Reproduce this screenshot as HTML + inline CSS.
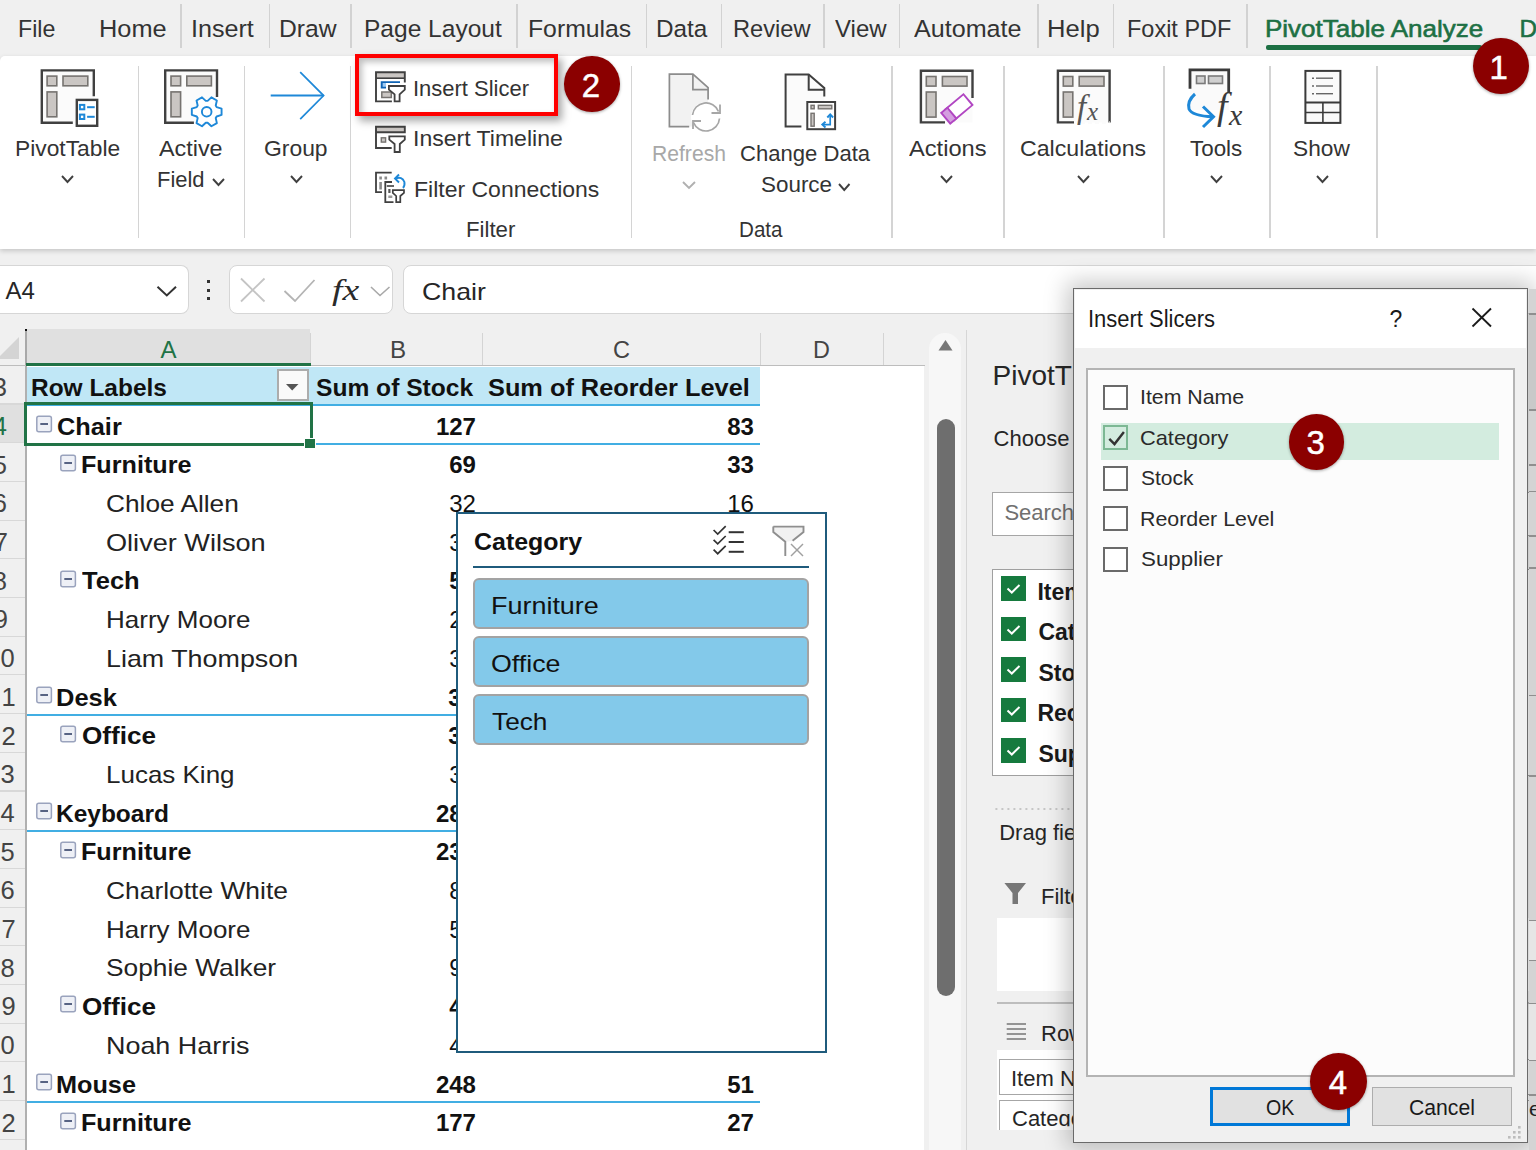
<!DOCTYPE html>
<html><head><meta charset="utf-8"><style>
html,body{margin:0;padding:0;}
body{width:1536px;height:1150px;overflow:hidden;position:relative;background:#f0f0f0;font-family:"Liberation Sans",sans-serif;}
.t{position:absolute;white-space:pre;line-height:1;transform-origin:0 0;}

</style></head><body>
<div style="position:absolute;left:0.00px;top:265.30px;width:188.70px;height:48.70px;background:#fff;border:1px solid #d6d6d6;box-sizing:border-box;border-radius:0 8px 8px 0;border-left:none;"></div>
<span class="t" style="left:5.50px;top:279.28px;font-size:24px;color:#262626;">A4</span>
<svg style="position:absolute;left:150px;top:280px;overflow:visible;" width="35" height="20" viewBox="150 280 35 20"><polyline points="157.5,286.8 166.8,295.5 176,286.8" fill="none" stroke="#333" stroke-width="2"/></svg>
<div style="position:absolute;left:206.50px;top:279.60px;width:3.80px;height:3.80px;background:#333;"></div>
<div style="position:absolute;left:206.50px;top:288.60px;width:3.80px;height:3.80px;background:#333;"></div>
<div style="position:absolute;left:206.50px;top:296.60px;width:3.80px;height:3.80px;background:#333;"></div>
<div style="position:absolute;left:229.00px;top:265.30px;width:164.00px;height:48.70px;background:#fff;border:1px solid #d6d6d6;box-sizing:border-box;border-radius:8px;"></div>
<svg style="position:absolute;left:236px;top:274px;overflow:visible;" width="160" height="32" viewBox="236 274 160 32"><line x1="241" y1="278.5" x2="264.5" y2="301.5" stroke="#c4c4c4" stroke-width="1.8"/><line x1="264.5" y1="278.5" x2="241" y2="301.5" stroke="#c4c4c4" stroke-width="1.8"/><polyline points="284.5,291 295,301 314.5,280" fill="none" stroke="#b4b4b4" stroke-width="1.8"/><polyline points="371,287 380,295.5 389.5,287" fill="none" stroke="#a9a9a9" stroke-width="1.6"/></svg>
<span class="t" style="left:332.00px;top:275.40px;font-size:30px;color:#2a2a2a;font-family:'Liberation Serif',serif;font-style:italic;transform:scaleX(1.2536);">fx</span>
<div style="position:absolute;left:403.30px;top:265.30px;width:1156.70px;height:48.70px;background:#fff;border:1px solid #d6d6d6;box-sizing:border-box;border-radius:8px;"></div>
<span class="t" style="left:421.89px;top:279.68px;font-size:24px;color:#262626;transform:scaleX(1.1143);">Chair</span>
<div style="position:absolute;left:0.00px;top:328.60px;width:925.00px;height:37.40px;background:#f0f0f0;"></div>
<svg style="position:absolute;left:0px;top:330px;overflow:visible;" width="26" height="36" viewBox="0 330 26 36"><polygon points="19,337 19,359 -3,359" fill="#d4d4d4"/></svg>
<div style="position:absolute;left:25.80px;top:328.60px;width:284.70px;height:37.40px;background:#e0e0e0;"></div>
<div style="position:absolute;left:310.00px;top:333.00px;width:1.00px;height:33.00px;background:#d4d4d4;"></div>
<div style="position:absolute;left:481.70px;top:333.00px;width:1.00px;height:33.00px;background:#d4d4d4;"></div>
<div style="position:absolute;left:759.80px;top:333.00px;width:1.00px;height:33.00px;background:#d4d4d4;"></div>
<div style="position:absolute;left:883.00px;top:333.00px;width:1.00px;height:33.00px;background:#d4d4d4;"></div>
<div style="position:absolute;left:25.20px;top:329.00px;width:1.60px;height:37.00px;background:#a9a9a9;"></div>
<div style="position:absolute;left:25.20px;top:328.60px;width:2.00px;height:2.20px;background:#111;"></div>
<div style="position:absolute;left:0.00px;top:364.80px;width:925.00px;height:1.60px;background:#bdbdbd;"></div>
<div style="position:absolute;left:25.80px;top:363.00px;width:285.20px;height:3.70px;background:#217346;"></div>
<span class="t" style="left:160.50px;top:337.98px;font-size:24px;color:#217346;">A</span>
<span class="t" style="left:389.59px;top:337.98px;font-size:24px;color:#444;transform:scaleX(1.0071);">B</span>
<span class="t" style="left:613.02px;top:337.98px;font-size:24px;color:#444;transform:scaleX(0.9812);">C</span>
<span class="t" style="left:813.02px;top:337.98px;font-size:24px;color:#444;transform:scaleX(0.9750);">D</span>
<div style="position:absolute;left:0.00px;top:366.40px;width:25.80px;height:783.60px;background:#f0f0f0;"></div>
<div style="position:absolute;left:0.00px;top:404.00px;width:25.80px;height:38.70px;background:#e0e0e0;"></div>
<div style="position:absolute;left:25.00px;top:366.40px;width:1.60px;height:783.60px;background:#b0b0b0;"></div>
<div style="position:absolute;left:0.00px;top:403.40px;width:25.00px;height:1.20px;background:#d8d8d8;"></div>
<span class="t" style="left:-7.20px;top:375.21px;font-size:25.5px;color:#444;">3</span>
<div style="position:absolute;left:0.00px;top:442.10px;width:25.00px;height:1.20px;background:#d8d8d8;"></div>
<span class="t" style="left:-7.20px;top:413.91px;font-size:25.5px;color:#217346;">4</span>
<div style="position:absolute;left:0.00px;top:480.80px;width:25.00px;height:1.20px;background:#d8d8d8;"></div>
<span class="t" style="left:-7.20px;top:452.61px;font-size:25.5px;color:#444;">5</span>
<div style="position:absolute;left:0.00px;top:519.50px;width:25.00px;height:1.20px;background:#d8d8d8;"></div>
<span class="t" style="left:-7.20px;top:491.31px;font-size:25.5px;color:#444;">6</span>
<div style="position:absolute;left:0.00px;top:558.20px;width:25.00px;height:1.20px;background:#d8d8d8;"></div>
<span class="t" style="left:-6.20px;top:530.01px;font-size:25.5px;color:#444;">7</span>
<div style="position:absolute;left:0.00px;top:596.90px;width:25.00px;height:1.20px;background:#d8d8d8;"></div>
<span class="t" style="left:-7.20px;top:568.71px;font-size:25.5px;color:#444;">8</span>
<div style="position:absolute;left:0.00px;top:635.60px;width:25.00px;height:1.20px;background:#d8d8d8;"></div>
<span class="t" style="left:-6.20px;top:607.41px;font-size:25.5px;color:#444;">9</span>
<div style="position:absolute;left:0.00px;top:674.30px;width:25.00px;height:1.20px;background:#d8d8d8;"></div>
<span class="t" style="left:0.60px;top:646.11px;font-size:25.5px;color:#444;">0</span>
<div style="position:absolute;left:0.00px;top:713.00px;width:25.00px;height:1.20px;background:#d8d8d8;"></div>
<span class="t" style="left:1.60px;top:684.81px;font-size:25.5px;color:#444;">1</span>
<div style="position:absolute;left:0.00px;top:751.70px;width:25.00px;height:1.20px;background:#d8d8d8;"></div>
<span class="t" style="left:1.60px;top:723.51px;font-size:25.5px;color:#444;">2</span>
<div style="position:absolute;left:0.00px;top:790.40px;width:25.00px;height:1.20px;background:#d8d8d8;"></div>
<span class="t" style="left:0.60px;top:762.21px;font-size:25.5px;color:#444;">3</span>
<div style="position:absolute;left:0.00px;top:829.10px;width:25.00px;height:1.20px;background:#d8d8d8;"></div>
<span class="t" style="left:0.60px;top:800.91px;font-size:25.5px;color:#444;">4</span>
<div style="position:absolute;left:0.00px;top:867.80px;width:25.00px;height:1.20px;background:#d8d8d8;"></div>
<span class="t" style="left:0.60px;top:839.61px;font-size:25.5px;color:#444;">5</span>
<div style="position:absolute;left:0.00px;top:906.50px;width:25.00px;height:1.20px;background:#d8d8d8;"></div>
<span class="t" style="left:0.60px;top:878.31px;font-size:25.5px;color:#444;">6</span>
<div style="position:absolute;left:0.00px;top:945.20px;width:25.00px;height:1.20px;background:#d8d8d8;"></div>
<span class="t" style="left:1.60px;top:917.01px;font-size:25.5px;color:#444;">7</span>
<div style="position:absolute;left:0.00px;top:983.90px;width:25.00px;height:1.20px;background:#d8d8d8;"></div>
<span class="t" style="left:0.60px;top:955.71px;font-size:25.5px;color:#444;">8</span>
<div style="position:absolute;left:0.00px;top:1022.60px;width:25.00px;height:1.20px;background:#d8d8d8;"></div>
<span class="t" style="left:1.60px;top:994.41px;font-size:25.5px;color:#444;">9</span>
<div style="position:absolute;left:0.00px;top:1061.30px;width:25.00px;height:1.20px;background:#d8d8d8;"></div>
<span class="t" style="left:0.60px;top:1033.11px;font-size:25.5px;color:#444;">0</span>
<div style="position:absolute;left:0.00px;top:1100.00px;width:25.00px;height:1.20px;background:#d8d8d8;"></div>
<span class="t" style="left:1.60px;top:1071.81px;font-size:25.5px;color:#444;">1</span>
<div style="position:absolute;left:0.00px;top:1138.70px;width:25.00px;height:1.20px;background:#d8d8d8;"></div>
<span class="t" style="left:1.60px;top:1110.51px;font-size:25.5px;color:#444;">2</span>
<div style="position:absolute;left:0.00px;top:1177.40px;width:25.00px;height:1.20px;background:#d8d8d8;"></div>
<span class="t" style="left:0.60px;top:1149.21px;font-size:25.5px;color:#444;">3</span>
<div style="position:absolute;left:26.60px;top:366.40px;width:897.90px;height:783.60px;background:#fff;"></div>
<div style="position:absolute;left:26.60px;top:366.70px;width:733.70px;height:37.30px;background:#c0e7f6;"></div>
<span class="t" style="left:30.98px;top:376.08px;font-size:24px;color:#111;font-weight:700;transform:scaleX(1.0188);">Row Labels</span>
<div style="position:absolute;left:277.00px;top:369.20px;width:31.80px;height:32.30px;background:#fafafa;border:2px solid #acacac;box-sizing:border-box;"></div>
<svg style="position:absolute;left:280px;top:380px;overflow:visible;" width="26" height="12" viewBox="280 380 26 12"><polygon points="286,384 298.5,384 292.2,390.5" fill="#555"/></svg>
<span class="t" style="left:315.60px;top:376.08px;font-size:24px;color:#111;font-weight:700;transform:scaleX(1.0246);">Sum of Stock</span>
<span class="t" style="left:487.50px;top:376.08px;font-size:24px;color:#111;font-weight:700;transform:scaleX(1.0552);">Sum of Reorder Level</span>
<div style="position:absolute;left:26.60px;top:403.70px;width:733.70px;height:2.10px;background:#41aee3;"></div>
<svg style="position:absolute;left:34.5px;top:413.9px;overflow:visible;" width="19.0" height="20.0" viewBox="34.5 413.9 19.0 20.0"><rect x="36.3" y="416.09999999999997" width="14.6" height="15.6" rx="2" fill="#eef0f6" stroke="#9aa3bd" stroke-width="1.5"/><line x1="39.8" y1="423.9" x2="47.5" y2="423.9" stroke="#3c4a6e" stroke-width="1.7"/></svg>
<span class="t" style="left:57.00px;top:414.68px;font-size:24px;color:#111;font-weight:700;transform:scaleX(1.0556);">Chair</span>
<span class="t" style="left:435.90px;top:414.68px;font-size:24px;color:#111;font-weight:700;">127</span>
<span class="t" style="left:727.15px;top:414.68px;font-size:24px;color:#111;font-weight:700;">83</span>
<div style="position:absolute;left:26.60px;top:442.60px;width:733.70px;height:2.10px;background:#41aee3;"></div>
<svg style="position:absolute;left:59px;top:452.59999999999997px;overflow:visible;" width="19" height="20.0" viewBox="59 452.59999999999997 19 20.0"><rect x="60.8" y="454.79999999999995" width="14.6" height="15.6" rx="2" fill="#eef0f6" stroke="#9aa3bd" stroke-width="1.5"/><line x1="64.3" y1="462.59999999999997" x2="72" y2="462.59999999999997" stroke="#3c4a6e" stroke-width="1.7"/></svg>
<span class="t" style="left:81.25px;top:453.38px;font-size:24px;color:#111;font-weight:700;transform:scaleX(1.0483);">Furniture</span>
<span class="t" style="left:449.25px;top:453.38px;font-size:24px;color:#111;font-weight:700;">69</span>
<span class="t" style="left:727.15px;top:453.38px;font-size:24px;color:#111;font-weight:700;">33</span>
<span class="t" style="left:105.91px;top:492.08px;font-size:24px;color:#222;transform:scaleX(1.0939);">Chloe Allen</span>
<span class="t" style="left:449.25px;top:492.08px;font-size:24px;color:#111;">32</span>
<span class="t" style="left:727.15px;top:492.08px;font-size:24px;color:#111;">16</span>
<span class="t" style="left:105.87px;top:530.78px;font-size:24px;color:#222;transform:scaleX(1.1295);">Oliver Wilson</span>
<span class="t" style="left:449.25px;top:530.78px;font-size:24px;color:#111;">37</span>
<span class="t" style="left:727.15px;top:530.78px;font-size:24px;color:#111;">17</span>
<svg style="position:absolute;left:59px;top:568.7px;overflow:visible;" width="19" height="20.0" viewBox="59 568.7 19 20.0"><rect x="60.8" y="570.9000000000001" width="14.6" height="15.6" rx="2" fill="#eef0f6" stroke="#9aa3bd" stroke-width="1.5"/><line x1="64.3" y1="578.7" x2="72" y2="578.7" stroke="#3c4a6e" stroke-width="1.7"/></svg>
<span class="t" style="left:82.30px;top:569.48px;font-size:24px;color:#111;font-weight:700;transform:scaleX(1.0639);">Tech</span>
<span class="t" style="left:449.25px;top:569.48px;font-size:24px;color:#111;font-weight:700;">58</span>
<span class="t" style="left:727.15px;top:569.48px;font-size:24px;color:#111;font-weight:700;">50</span>
<span class="t" style="left:105.92px;top:608.18px;font-size:24px;color:#222;transform:scaleX(1.0832);">Harry Moore</span>
<span class="t" style="left:449.25px;top:608.18px;font-size:24px;color:#111;">25</span>
<span class="t" style="left:727.15px;top:608.18px;font-size:24px;color:#111;">28</span>
<span class="t" style="left:105.88px;top:646.88px;font-size:24px;color:#222;transform:scaleX(1.1194);">Liam Thompson</span>
<span class="t" style="left:449.25px;top:646.88px;font-size:24px;color:#111;">33</span>
<span class="t" style="left:727.15px;top:646.88px;font-size:24px;color:#111;">22</span>
<svg style="position:absolute;left:34.5px;top:684.8000000000002px;overflow:visible;" width="19.0" height="20.0" viewBox="34.5 684.8000000000002 19.0 20.0"><rect x="36.3" y="687.0000000000002" width="14.6" height="15.6" rx="2" fill="#eef0f6" stroke="#9aa3bd" stroke-width="1.5"/><line x1="39.8" y1="694.8000000000002" x2="47.5" y2="694.8000000000002" stroke="#3c4a6e" stroke-width="1.7"/></svg>
<span class="t" style="left:55.94px;top:685.58px;font-size:24px;color:#111;font-weight:700;transform:scaleX(1.0609);">Desk</span>
<span class="t" style="left:448.25px;top:685.58px;font-size:24px;color:#111;font-weight:700;">34</span>
<span class="t" style="left:727.15px;top:685.58px;font-size:24px;color:#111;font-weight:700;">20</span>
<div style="position:absolute;left:26.60px;top:713.50px;width:733.70px;height:2.10px;background:#41aee3;"></div>
<svg style="position:absolute;left:59px;top:723.5000000000001px;overflow:visible;" width="19" height="20.0" viewBox="59 723.5000000000001 19 20.0"><rect x="60.8" y="725.7000000000002" width="14.6" height="15.6" rx="2" fill="#eef0f6" stroke="#9aa3bd" stroke-width="1.5"/><line x1="64.3" y1="733.5000000000001" x2="72" y2="733.5000000000001" stroke="#3c4a6e" stroke-width="1.7"/></svg>
<span class="t" style="left:82.30px;top:724.28px;font-size:24px;color:#111;font-weight:700;transform:scaleX(1.0877);">Office</span>
<span class="t" style="left:448.25px;top:724.28px;font-size:24px;color:#111;font-weight:700;">34</span>
<span class="t" style="left:727.15px;top:724.28px;font-size:24px;color:#111;font-weight:700;">20</span>
<span class="t" style="left:105.92px;top:762.98px;font-size:24px;color:#222;transform:scaleX(1.0825);">Lucas King</span>
<span class="t" style="left:449.25px;top:762.98px;font-size:24px;color:#111;">34</span>
<span class="t" style="left:727.15px;top:762.98px;font-size:24px;color:#111;">20</span>
<svg style="position:absolute;left:34.5px;top:800.9000000000001px;overflow:visible;" width="19.0" height="20.0" viewBox="34.5 800.9000000000001 19.0 20.0"><rect x="36.3" y="803.1000000000001" width="14.6" height="15.6" rx="2" fill="#eef0f6" stroke="#9aa3bd" stroke-width="1.5"/><line x1="39.8" y1="810.9000000000001" x2="47.5" y2="810.9000000000001" stroke="#3c4a6e" stroke-width="1.7"/></svg>
<span class="t" style="left:55.98px;top:801.68px;font-size:24px;color:#111;font-weight:700;transform:scaleX(1.0199);">Keyboard</span>
<span class="t" style="left:435.90px;top:801.68px;font-size:24px;color:#111;font-weight:700;">281</span>
<span class="t" style="left:713.80px;top:801.68px;font-size:24px;color:#111;font-weight:700;">140</span>
<div style="position:absolute;left:26.60px;top:829.60px;width:733.70px;height:2.10px;background:#41aee3;"></div>
<svg style="position:absolute;left:59px;top:839.6000000000001px;overflow:visible;" width="19" height="20.0" viewBox="59 839.6000000000001 19 20.0"><rect x="60.8" y="841.8000000000002" width="14.6" height="15.6" rx="2" fill="#eef0f6" stroke="#9aa3bd" stroke-width="1.5"/><line x1="64.3" y1="849.6000000000001" x2="72" y2="849.6000000000001" stroke="#3c4a6e" stroke-width="1.7"/></svg>
<span class="t" style="left:81.25px;top:840.38px;font-size:24px;color:#111;font-weight:700;transform:scaleX(1.0483);">Furniture</span>
<span class="t" style="left:435.90px;top:840.38px;font-size:24px;color:#111;font-weight:700;">236</span>
<span class="t" style="left:715.13px;top:840.38px;font-size:24px;color:#111;font-weight:700;">110</span>
<span class="t" style="left:105.90px;top:879.08px;font-size:24px;color:#222;transform:scaleX(1.0997);">Charlotte White</span>
<span class="t" style="left:449.25px;top:879.08px;font-size:24px;color:#111;">85</span>
<span class="t" style="left:727.15px;top:879.08px;font-size:24px;color:#111;">40</span>
<span class="t" style="left:105.92px;top:917.78px;font-size:24px;color:#222;transform:scaleX(1.0832);">Harry Moore</span>
<span class="t" style="left:449.25px;top:917.78px;font-size:24px;color:#111;">56</span>
<span class="t" style="left:727.15px;top:917.78px;font-size:24px;color:#111;">30</span>
<span class="t" style="left:105.90px;top:956.48px;font-size:24px;color:#222;transform:scaleX(1.0961);">Sophie Walker</span>
<span class="t" style="left:449.25px;top:956.48px;font-size:24px;color:#111;">95</span>
<span class="t" style="left:727.15px;top:956.48px;font-size:24px;color:#111;">40</span>
<svg style="position:absolute;left:59px;top:994.4000000000001px;overflow:visible;" width="19" height="20.0" viewBox="59 994.4000000000001 19 20.0"><rect x="60.8" y="996.6000000000001" width="14.6" height="15.6" rx="2" fill="#eef0f6" stroke="#9aa3bd" stroke-width="1.5"/><line x1="64.3" y1="1004.4000000000001" x2="72" y2="1004.4000000000001" stroke="#3c4a6e" stroke-width="1.7"/></svg>
<span class="t" style="left:82.30px;top:995.18px;font-size:24px;color:#111;font-weight:700;transform:scaleX(1.0877);">Office</span>
<span class="t" style="left:449.25px;top:995.18px;font-size:24px;color:#111;font-weight:700;">45</span>
<span class="t" style="left:727.15px;top:995.18px;font-size:24px;color:#111;font-weight:700;">30</span>
<span class="t" style="left:105.88px;top:1033.88px;font-size:24px;color:#222;transform:scaleX(1.1209);">Noah Harris</span>
<span class="t" style="left:449.25px;top:1033.88px;font-size:24px;color:#111;">45</span>
<span class="t" style="left:727.15px;top:1033.88px;font-size:24px;color:#111;">30</span>
<svg style="position:absolute;left:34.5px;top:1071.8000000000002px;overflow:visible;" width="19.0" height="20.0" viewBox="34.5 1071.8000000000002 19.0 20.0"><rect x="36.3" y="1074.0000000000002" width="14.6" height="15.6" rx="2" fill="#eef0f6" stroke="#9aa3bd" stroke-width="1.5"/><line x1="39.8" y1="1081.8000000000002" x2="47.5" y2="1081.8000000000002" stroke="#3c4a6e" stroke-width="1.7"/></svg>
<span class="t" style="left:55.95px;top:1072.58px;font-size:24px;color:#111;font-weight:700;transform:scaleX(1.0514);">Mouse</span>
<span class="t" style="left:435.90px;top:1072.58px;font-size:24px;color:#111;font-weight:700;">248</span>
<span class="t" style="left:727.15px;top:1072.58px;font-size:24px;color:#111;font-weight:700;">51</span>
<div style="position:absolute;left:26.60px;top:1100.50px;width:733.70px;height:2.10px;background:#41aee3;"></div>
<svg style="position:absolute;left:59px;top:1110.5px;overflow:visible;" width="19" height="20.0" viewBox="59 1110.5 19 20.0"><rect x="60.8" y="1112.7" width="14.6" height="15.6" rx="2" fill="#eef0f6" stroke="#9aa3bd" stroke-width="1.5"/><line x1="64.3" y1="1120.5" x2="72" y2="1120.5" stroke="#3c4a6e" stroke-width="1.7"/></svg>
<span class="t" style="left:81.25px;top:1111.28px;font-size:24px;color:#111;font-weight:700;transform:scaleX(1.0483);">Furniture</span>
<span class="t" style="left:435.90px;top:1111.28px;font-size:24px;color:#111;font-weight:700;">177</span>
<span class="t" style="left:727.15px;top:1111.28px;font-size:24px;color:#111;font-weight:700;">27</span>
<span class="t" style="left:107.00px;top:1149.98px;font-size:24px;color:#222;">Ava Brown</span>
<span class="t" style="left:449.25px;top:1149.98px;font-size:24px;color:#111;">90</span>
<span class="t" style="left:727.15px;top:1149.98px;font-size:24px;color:#111;">12</span>
<div style="position:absolute;left:23.60px;top:402.30px;width:289.00px;height:44.00px;border:3px solid #217346;box-sizing:border-box;"></div>
<div style="position:absolute;left:305.30px;top:438.60px;width:9.50px;height:9.70px;background:#217346;outline:1.5px solid #fff;"></div>
<div style="position:absolute;left:456.30px;top:1053.00px;width:370.30px;height:5.00px;background:#fff;"></div>
<div style="position:absolute;left:456.30px;top:512.30px;width:370.30px;height:541.00px;background:#fff;border:2px solid #1f5b7c;box-sizing:border-box;"></div>
<span class="t" style="left:473.90px;top:530.48px;font-size:24px;color:#111;font-weight:700;transform:scaleX(1.0394);">Category</span>
<svg style="position:absolute;left:706px;top:520px;overflow:visible;" width="104" height="40" viewBox="706 520 104 40"><polyline points="713.6,530.0 717.7,534.1 725.7,526.2" fill="none" stroke="#333" stroke-width="1.7"/><line x1="728.7" y1="532.2" x2="743.8" y2="532.2" stroke="#333" stroke-width="2"/><polyline points="713.6,539.8 717.7,543.9 725.7,536.0" fill="none" stroke="#333" stroke-width="1.7"/><line x1="728.7" y1="542.0" x2="743.8" y2="542.0" stroke="#333" stroke-width="2"/><polyline points="713.6,549.6 717.7,553.7 725.7,545.8000000000001" fill="none" stroke="#333" stroke-width="1.7"/><line x1="728.7" y1="551.8000000000001" x2="743.8" y2="551.8000000000001" stroke="#333" stroke-width="2"/><polygon points="773.3,526.6 803.5,526.6 803.5,532 792.6,541 785.3,541.7 773.3,532" fill="#f1f1f1"/><polyline points="773.3,526.6 803.5,526.6 803.5,532 792.6,540.8" fill="none" stroke="#8f8f8f" stroke-width="1.9"/><polyline points="773.3,526.6 773.3,532 785.3,541.7 785.3,556" fill="none" stroke="#8f8f8f" stroke-width="1.9"/><line x1="791" y1="544" x2="803" y2="556" stroke="#a0a0a0" stroke-width="1.4"/><line x1="803" y1="544" x2="791" y2="556" stroke="#a0a0a0" stroke-width="1.4"/></svg>
<div style="position:absolute;left:473.30px;top:566.20px;width:336.00px;height:2.00px;background:#1f5b7c;"></div>
<div style="position:absolute;left:473.30px;top:578.00px;width:336.00px;height:51.00px;background:#83c9ea;border:2px solid #a3a3a3;box-sizing:border-box;border-radius:6px;"></div>
<span class="t" style="left:490.88px;top:594.48px;font-size:24px;color:#111;transform:scaleX(1.1226);">Furniture</span>
<div style="position:absolute;left:473.30px;top:636.00px;width:336.00px;height:51.00px;background:#83c9ea;border:2px solid #a3a3a3;box-sizing:border-box;border-radius:6px;"></div>
<span class="t" style="left:490.88px;top:652.48px;font-size:24px;color:#111;transform:scaleX(1.1165);">Office</span>
<div style="position:absolute;left:473.30px;top:694.00px;width:336.00px;height:51.30px;background:#83c9ea;border:2px solid #a3a3a3;box-sizing:border-box;border-radius:6px;"></div>
<span class="t" style="left:492.00px;top:710.48px;font-size:24px;color:#111;transform:scaleX(1.0943);">Tech</span>
<div style="position:absolute;left:924.50px;top:366.40px;width:42.20px;height:783.60px;background:#f0f0f0;"></div>
<div style="position:absolute;left:928.50px;top:333.00px;width:32.50px;height:867.00px;background:#f7f7f7;border-radius:16px;"></div>
<svg style="position:absolute;left:936px;top:338px;overflow:visible;" width="20" height="14" viewBox="936 338 20 14"><polygon points="945.5,340 952.5,350.5 938.5,350.5" fill="#777"/></svg>
<div style="position:absolute;left:937.00px;top:419.30px;width:17.50px;height:576.70px;background:#6e6e6e;border-radius:9px;"></div>
<div style="position:absolute;left:966.20px;top:330.00px;width:1.20px;height:820.00px;background:#d6d6d6;"></div>
<div style="position:absolute;left:967.40px;top:314.00px;width:568.60px;height:836.00px;background:#f0f0f0;"></div>
<span class="t" style="left:992.60px;top:361.59px;font-size:28px;color:#262626;">PivotT</span>
<span class="t" style="left:993.60px;top:428.47px;font-size:22px;color:#262626;">Choose fields to add to report:</span>
<div style="position:absolute;left:991.90px;top:492.00px;width:538.10px;height:43.80px;background:#fff;border:1.5px solid #a6a6a6;box-sizing:border-box;"></div>
<span class="t" style="left:1004.40px;top:501.77px;font-size:22px;color:#707070;">Search</span>
<div style="position:absolute;left:991.60px;top:568.60px;width:538.40px;height:207.50px;background:#fff;border:1.5px solid #a0a0a0;box-sizing:border-box;"></div>
<div style="position:absolute;left:1000.70px;top:576.30px;width:25.30px;height:24.40px;background:#167a3e;"></div>
<svg style="position:absolute;left:1003px;top:578.3px;overflow:visible;" width="21" height="20.0" viewBox="1003 578.3 21 20.0"><polyline points="1007.5,588.8 1011.8,592.8 1019.5,585.3" fill="none" stroke="#fff" stroke-width="2"/></svg>
<span class="t" style="left:1037.40px;top:580.53px;font-size:23px;color:#1a1a1a;font-weight:700;">Item Name</span>
<div style="position:absolute;left:1000.70px;top:616.80px;width:25.30px;height:24.40px;background:#167a3e;"></div>
<svg style="position:absolute;left:1003px;top:618.8px;overflow:visible;" width="21" height="20.0" viewBox="1003 618.8 21 20.0"><polyline points="1007.5,629.3 1011.8,633.3 1019.5,625.8" fill="none" stroke="#fff" stroke-width="2"/></svg>
<span class="t" style="left:1038.40px;top:621.03px;font-size:23px;color:#1a1a1a;font-weight:700;">Category</span>
<div style="position:absolute;left:1000.70px;top:657.30px;width:25.30px;height:24.40px;background:#167a3e;"></div>
<svg style="position:absolute;left:1003px;top:659.3px;overflow:visible;" width="21" height="20.0" viewBox="1003 659.3 21 20.0"><polyline points="1007.5,669.8 1011.8,673.8 1019.5,666.3" fill="none" stroke="#fff" stroke-width="2"/></svg>
<span class="t" style="left:1038.40px;top:661.53px;font-size:23px;color:#1a1a1a;font-weight:700;">Stock</span>
<div style="position:absolute;left:1000.70px;top:697.80px;width:25.30px;height:24.40px;background:#167a3e;"></div>
<svg style="position:absolute;left:1003px;top:699.8px;overflow:visible;" width="21" height="20.0" viewBox="1003 699.8 21 20.0"><polyline points="1007.5,710.3 1011.8,714.3 1019.5,706.8" fill="none" stroke="#fff" stroke-width="2"/></svg>
<span class="t" style="left:1037.40px;top:702.03px;font-size:23px;color:#1a1a1a;font-weight:700;">Reorder Level</span>
<div style="position:absolute;left:1000.70px;top:738.30px;width:25.30px;height:24.40px;background:#167a3e;"></div>
<svg style="position:absolute;left:1003px;top:740.3px;overflow:visible;" width="21" height="20.0" viewBox="1003 740.3 21 20.0"><polyline points="1007.5,750.8 1011.8,754.8 1019.5,747.3" fill="none" stroke="#fff" stroke-width="2"/></svg>
<span class="t" style="left:1038.40px;top:742.53px;font-size:23px;color:#1a1a1a;font-weight:700;">Supplier</span>
<svg style="position:absolute;left:994px;top:806px;overflow:visible;" width="542" height="6" viewBox="994 806 542 6"><line x1="995.4" y1="809" x2="1536" y2="809" stroke="#b8b8b8" stroke-width="1.3" stroke-dasharray="2 4"/></svg>
<span class="t" style="left:999.20px;top:822.37px;font-size:22px;color:#262626;">Drag fields between areas below:</span>
<svg style="position:absolute;left:1002px;top:880px;overflow:visible;" width="28" height="26" viewBox="1002 880 28 26"><polygon points="1004.4,883 1026,883 1018,893 1018,904 1012.5,904 1012.5,893" fill="#777"/></svg>
<span class="t" style="left:1041.00px;top:886.17px;font-size:22px;color:#262626;">Filters</span>
<div style="position:absolute;left:997.00px;top:918.40px;width:539.00px;height:72.40px;background:#fff;"></div>
<div style="position:absolute;left:997.00px;top:1002.30px;width:539.00px;height:1.50px;background:#bdbdbd;"></div>
<svg style="position:absolute;left:1004px;top:1020px;overflow:visible;" width="26" height="22" viewBox="1004 1020 26 22"><line x1="1006.7" y1="1024" x2="1026" y2="1024" stroke="#8a8a8a" stroke-width="1.8"/><line x1="1006.7" y1="1029" x2="1026" y2="1029" stroke="#8a8a8a" stroke-width="1.8"/><line x1="1006.7" y1="1034" x2="1026" y2="1034" stroke="#8a8a8a" stroke-width="1.8"/><line x1="1006.7" y1="1039" x2="1026" y2="1039" stroke="#8a8a8a" stroke-width="1.8"/></svg>
<span class="t" style="left:1041.00px;top:1022.87px;font-size:22px;color:#262626;">Rows</span>
<div style="position:absolute;left:997.00px;top:1050.00px;width:539.00px;height:100.00px;background:#fff;"></div>
<div style="position:absolute;left:997.00px;top:1130.00px;width:539.00px;height:20.00px;background:#f0f0f0;"></div>
<div style="position:absolute;left:999.30px;top:1059.40px;width:536.70px;height:35.40px;background:#fff;border:1.5px solid #a6a6a6;box-sizing:border-box;"></div>
<span class="t" style="left:1011.00px;top:1067.97px;font-size:22px;color:#262626;">Item Name</span>
<div style="position:absolute;left:999.30px;top:1100.20px;width:536.70px;height:39.80px;background:#fff;border:1.5px solid #a6a6a6;box-sizing:border-box;"></div>
<div style="position:absolute;left:997.00px;top:1130.00px;width:539.00px;height:20.00px;background:#f0f0f0;"></div>
<span class="t" style="left:1012.00px;top:1108.17px;font-size:22px;color:#262626;clip-path:inset(0 0 4px 0);">Category</span>
<div style="position:absolute;left:0.00px;top:0.00px;width:1536.00px;height:55.00px;background:#f0f0f0;"></div>
<span class="t" style="left:18.09px;top:17.23px;font-size:24.3px;color:#333333;transform:scaleX(0.9553);">File</span>
<span class="t" style="left:99.41px;top:17.23px;font-size:24.3px;color:#333333;transform:scaleX(1.0434);">Home</span>
<span class="t" style="left:191.43px;top:17.23px;font-size:24.3px;color:#333333;transform:scaleX(1.0336);">Insert</span>
<span class="t" style="left:278.97px;top:17.23px;font-size:24.3px;color:#333333;transform:scaleX(1.0154);">Draw</span>
<span class="t" style="left:363.68px;top:17.23px;font-size:24.3px;color:#333333;transform:scaleX(1.0097);">Page Layout</span>
<span class="t" style="left:527.96px;top:17.23px;font-size:24.3px;color:#333333;transform:scaleX(1.0191);">Formulas</span>
<span class="t" style="left:655.99px;top:17.23px;font-size:24.3px;color:#333333;">Data</span>
<span class="t" style="left:733.05px;top:17.23px;font-size:24.3px;color:#333333;transform:scaleX(0.9729);">Review</span>
<span class="t" style="left:834.70px;top:17.23px;font-size:24.3px;color:#333333;transform:scaleX(0.9871);">View</span>
<span class="t" style="left:914.00px;top:17.23px;font-size:24.3px;color:#333333;transform:scaleX(1.0340);">Automate</span>
<span class="t" style="left:1047.39px;top:17.23px;font-size:24.3px;color:#333333;transform:scaleX(1.0536);">Help</span>
<span class="t" style="left:1127.07px;top:17.23px;font-size:24.3px;color:#333333;transform:scaleX(0.9662);">Foxit PDF</span>
<span class="t" style="left:1264.86px;top:17.23px;font-size:24.3px;color:#1d7044;transform:scaleX(1.0701);-webkit-text-stroke:0.6px #1d7044;">PivotTable Analyze</span>
<span class="t" style="left:1519.50px;top:17.23px;font-size:24.3px;color:#1d7044;-webkit-text-stroke:0.6px #1d7044;">D</span>
<div style="position:absolute;left:180.40px;top:4.00px;width:1.20px;height:43.50px;background:#d2d2d2;"></div>
<div style="position:absolute;left:268.90px;top:4.00px;width:1.20px;height:43.50px;background:#d2d2d2;"></div>
<div style="position:absolute;left:350.40px;top:4.00px;width:1.20px;height:43.50px;background:#d2d2d2;"></div>
<div style="position:absolute;left:516.40px;top:4.00px;width:1.20px;height:43.50px;background:#d2d2d2;"></div>
<div style="position:absolute;left:645.90px;top:4.00px;width:1.20px;height:43.50px;background:#d2d2d2;"></div>
<div style="position:absolute;left:720.80px;top:4.00px;width:1.20px;height:43.50px;background:#d2d2d2;"></div>
<div style="position:absolute;left:823.40px;top:4.00px;width:1.20px;height:43.50px;background:#d2d2d2;"></div>
<div style="position:absolute;left:898.80px;top:4.00px;width:1.20px;height:43.50px;background:#d2d2d2;"></div>
<div style="position:absolute;left:1037.40px;top:4.00px;width:1.20px;height:43.50px;background:#d2d2d2;"></div>
<div style="position:absolute;left:1113.00px;top:4.00px;width:1.20px;height:43.50px;background:#d2d2d2;"></div>
<div style="position:absolute;left:1246.40px;top:4.00px;width:1.20px;height:43.50px;background:#d2d2d2;"></div>
<div style="position:absolute;left:1266.00px;top:45.00px;width:216.00px;height:4.50px;background:#1d7044;border-radius:2px;"></div>
<div style="position:absolute;left:0.00px;top:55.50px;width:1536.00px;height:193.50px;background:#ffffff;border-radius:5px 0 0 0;box-shadow:0 2px 5px rgba(0,0,0,0.18);"></div>
<div style="position:absolute;left:137.60px;top:66.00px;width:1.40px;height:171.50px;background:#d4d4d4;"></div>
<div style="position:absolute;left:243.70px;top:66.00px;width:1.40px;height:171.50px;background:#d4d4d4;"></div>
<div style="position:absolute;left:350.10px;top:66.00px;width:1.40px;height:171.50px;background:#d4d4d4;"></div>
<div style="position:absolute;left:630.60px;top:66.00px;width:1.40px;height:171.50px;background:#d4d4d4;"></div>
<div style="position:absolute;left:891.30px;top:66.00px;width:1.40px;height:171.50px;background:#d4d4d4;"></div>
<div style="position:absolute;left:1003.20px;top:66.00px;width:1.40px;height:171.50px;background:#d4d4d4;"></div>
<div style="position:absolute;left:1163.20px;top:66.00px;width:1.40px;height:171.50px;background:#d4d4d4;"></div>
<div style="position:absolute;left:1269.30px;top:66.00px;width:1.40px;height:171.50px;background:#d4d4d4;"></div>
<div style="position:absolute;left:1376.20px;top:66.00px;width:1.40px;height:171.50px;background:#d4d4d4;"></div>
<span class="t" style="left:15.39px;top:138.26px;font-size:22.6px;color:#333333;transform:scaleX(1.0090);">PivotTable</span>
<svg style="position:absolute;left:61.50px;top:176.00px;overflow:visible;" width="11.00" height="6.00" viewBox="0 0 11.00 6.00"><polyline points="0,0 5.50,6.00 11.00,0" fill="none" stroke="#404040" stroke-width="1.9"/></svg>
<span class="t" style="left:159.00px;top:138.26px;font-size:22.6px;color:#333333;transform:scaleX(1.0335);">Active</span>
<span class="t" style="left:156.53px;top:168.66px;font-size:22.6px;color:#333333;transform:scaleX(0.9703);">Field</span>
<svg style="position:absolute;left:212.50px;top:178.50px;overflow:visible;" width="11.00" height="6.00" viewBox="0 0 11.00 6.00"><polyline points="0,0 5.50,6.00 11.00,0" fill="none" stroke="#404040" stroke-width="1.9"/></svg>
<span class="t" style="left:264.49px;top:138.26px;font-size:22.6px;color:#333333;transform:scaleX(1.0126);">Group</span>
<svg style="position:absolute;left:291.00px;top:176.00px;overflow:visible;" width="11.00" height="6.00" viewBox="0 0 11.00 6.00"><polyline points="0,0 5.50,6.00 11.00,0" fill="none" stroke="#404040" stroke-width="1.9"/></svg>
<span class="t" style="left:412.86px;top:77.96px;font-size:22.6px;color:#333333;transform:scaleX(0.9724);">Insert Slicer</span>
<span class="t" style="left:412.76px;top:128.36px;font-size:22.6px;color:#333333;transform:scaleX(1.0196);">Insert Timeline</span>
<span class="t" style="left:413.78px;top:178.56px;font-size:22.6px;color:#333333;transform:scaleX(1.0178);">Filter Connections</span>
<span class="t" style="left:466.02px;top:219.16px;font-size:22.6px;color:#333333;transform:scaleX(0.9822);">Filter</span>
<span class="t" style="left:651.57px;top:143.26px;font-size:22.6px;color:#a8a8a8;transform:scaleX(0.9349);">Refresh</span>
<svg style="position:absolute;left:683.00px;top:182.00px;overflow:visible;" width="12.00" height="6.00" viewBox="0 0 12.00 6.00"><polyline points="0,0 6.00,6.00 12.00,0" fill="none" stroke="#b0b0b0" stroke-width="1.9"/></svg>
<span class="t" style="left:740.02px;top:143.26px;font-size:22.6px;color:#333333;transform:scaleX(0.9768);">Change Data</span>
<span class="t" style="left:760.51px;top:174.06px;font-size:22.6px;color:#333333;transform:scaleX(0.9925);">Source</span>
<svg style="position:absolute;left:838.50px;top:183.50px;overflow:visible;" width="10.50" height="6.00" viewBox="0 0 10.50 6.00"><polyline points="0,0 5.25,6.00 10.50,0" fill="none" stroke="#404040" stroke-width="1.9"/></svg>
<span class="t" style="left:738.99px;top:218.56px;font-size:22.6px;color:#333333;transform:scaleX(0.9118);">Data</span>
<span class="t" style="left:908.50px;top:137.96px;font-size:22.6px;color:#333333;transform:scaleX(1.0475);">Actions</span>
<svg style="position:absolute;left:940.50px;top:176.00px;overflow:visible;" width="11.00" height="6.00" viewBox="0 0 11.00 6.00"><polyline points="0,0 5.50,6.00 11.00,0" fill="none" stroke="#404040" stroke-width="1.9"/></svg>
<span class="t" style="left:1019.98px;top:137.96px;font-size:22.6px;color:#333333;transform:scaleX(1.0248);">Calculations</span>
<svg style="position:absolute;left:1077.50px;top:176.00px;overflow:visible;" width="11.00" height="6.00" viewBox="0 0 11.00 6.00"><polyline points="0,0 5.50,6.00 11.00,0" fill="none" stroke="#404040" stroke-width="1.9"/></svg>
<span class="t" style="left:1190.00px;top:137.66px;font-size:22.6px;color:#333333;transform:scaleX(0.9915);">Tools</span>
<svg style="position:absolute;left:1211.00px;top:175.50px;overflow:visible;" width="11.00" height="6.00" viewBox="0 0 11.00 6.00"><polyline points="0,0 5.50,6.00 11.00,0" fill="none" stroke="#404040" stroke-width="1.9"/></svg>
<span class="t" style="left:1293.29px;top:137.66px;font-size:22.6px;color:#333333;transform:scaleX(1.0053);">Show</span>
<svg style="position:absolute;left:1317.00px;top:175.50px;overflow:visible;" width="11.00" height="6.00" viewBox="0 0 11.00 6.00"><polyline points="0,0 5.50,6.00 11.00,0" fill="none" stroke="#404040" stroke-width="1.9"/></svg>
<svg style="position:absolute;left:36px;top:64px;overflow:visible;" width="70" height="70" viewBox="36 64 70 70"><rect x="41.8" y="70.4" width="52.0" height="52.3" fill="#fbfbfb"/><polyline points="72.8,122.7 41.8,122.7 41.8,70.4 93.8,70.4 93.8,96.3" fill="none" stroke="#404040" stroke-width="2.4"/><rect x="47.099999999999994" y="76.1" width="9.700000000000005" height="9.699999999999998" fill="#cac6c3" stroke="#767370" stroke-width="1.6"/><rect x="63.0" y="76.1" width="24.79999999999999" height="9.699999999999998" fill="#cac6c3" stroke="#767370" stroke-width="1.6"/><rect x="47.099999999999994" y="91.89999999999999" width="9.700000000000005" height="24.9" fill="#cac6c3" stroke="#767370" stroke-width="1.6"/><rect x="76.8" y="99.9" width="20.4" height="25.9" fill="#fff" stroke="#404040" stroke-width="2.4"/><rect x="79.9" y="104.9" width="4.4" height="4.4" fill="#fff" stroke="#1e88d8" stroke-width="2"/><rect x="79.9" y="114.6" width="4.4" height="4.4" fill="#fff" stroke="#1e88d8" stroke-width="2"/><line x1="87.1" y1="107.2" x2="94.7" y2="107.2" stroke="#1e88d8" stroke-width="2"/><line x1="87.1" y1="116.8" x2="94.7" y2="116.8" stroke="#1e88d8" stroke-width="2"/></svg>
<svg style="position:absolute;left:158px;top:64px;overflow:visible;" width="70" height="70" viewBox="158 64 70 70"><rect x="165.2" y="70.4" width="51.80000000000001" height="52.3" fill="#fbfbfb"/><polyline points="193.9,122.7 165.2,122.7 165.2,70.4 217,70.4 217,96.9" fill="none" stroke="#404040" stroke-width="2.4"/><rect x="171.0" y="76.1" width="9.600000000000017" height="9.699999999999998" fill="#cac6c3" stroke="#767370" stroke-width="1.6"/><rect x="186.8" y="76.1" width="24.599999999999987" height="9.699999999999998" fill="#cac6c3" stroke="#767370" stroke-width="1.6"/><rect x="171.0" y="91.89999999999999" width="9.600000000000017" height="24.9" fill="#cac6c3" stroke="#767370" stroke-width="1.6"/><path d="M221.57,108.64 L221.57,114.96 L216.65,116.48 L215.73,118.08 L216.87,123.10 L211.40,126.26 L207.62,122.76 L205.78,122.76 L202.00,126.26 L196.53,123.10 L197.67,118.08 L196.75,116.48 L191.83,114.96 L191.83,108.64 L196.75,107.12 L197.67,105.52 L196.53,100.50 L202.00,97.34 L205.78,100.84 L207.62,100.84 L211.40,97.34 L216.87,100.50 L215.73,105.52 L216.65,107.12Z" fill="#fff" stroke="#1e88d8" stroke-width="1.9" stroke-linejoin="round"/><circle cx="206.7" cy="111.8" r="4.8" fill="none" stroke="#1e88d8" stroke-width="1.9"/></svg>
<svg style="position:absolute;left:264px;top:64px;overflow:visible;" width="70" height="70" viewBox="264 64 70 70"><line x1="270.7" y1="95.6" x2="323.6" y2="95.6" stroke="#1e88d8" stroke-width="2"/><polyline points="300.2,72.2 323.6,95.6 300.2,119.1" fill="none" stroke="#1e88d8" stroke-width="1.7"/></svg>
<svg style="position:absolute;left:370px;top:66px;overflow:visible;" width="42" height="42" viewBox="370 66 42 42"><rect x="376" y="72.3" width="28.8" height="29.1" fill="#fff"/><rect x="376" y="72.3" width="28.8" height="5.9" fill="#cac6c3"/><polyline points="391.9,101.4 376,101.4 376,72.3 404.8,72.3 404.8,82.6" fill="none" stroke="#404040" stroke-width="1.9"/><line x1="376" y1="78.2" x2="404.8" y2="78.2" stroke="#404040" stroke-width="1.6"/><rect x="382" y="83" width="4" height="4" fill="#9cc8f2"/><polyline points="400,82.1 381.7,82.1 381.7,87.6 386,87.6" fill="none" stroke="#0f63b4" stroke-width="1.9"/><rect x="381.8" y="92" width="9.5" height="5.5" fill="#cac6c3" stroke="#767370" stroke-width="1.5"/><path d="M388.9,86 H404.8 V89.6 L399.6,94.3 V101.4 H394.6 V94.3 L388.9,89.6 Z" fill="#fff" stroke="#404040" stroke-width="1.8" stroke-linejoin="miter"/></svg>
<svg style="position:absolute;left:370px;top:120px;overflow:visible;" width="42" height="40" viewBox="370 120 42 40"><rect x="376" y="126.7" width="28.8" height="21.3" fill="#fff"/><rect x="376" y="126.7" width="28.8" height="5.5" fill="#cac6c3"/><polyline points="391.7,148 376,148 376,126.7 404.8,126.7 404.8,132.2 376,132.2" fill="none" stroke="#404040" stroke-width="1.9"/><rect x="381.3" y="137.8" width="4.3" height="4.3" fill="#c8c6c4" stroke="#767370" stroke-width="1.4"/><path d="M389.3,136.3 H404.8 V139.6 L399.8,144 V152 H394.6 V144 L389.3,139.6 Z" fill="#fff" stroke="#404040" stroke-width="1.8"/></svg>
<svg style="position:absolute;left:370px;top:166px;overflow:visible;" width="42" height="42" viewBox="370 166 42 42"><polyline points="391.7,172.7 376,172.7 376,192.1 382,192.1" fill="none" stroke="#404040" stroke-width="1.8"/><rect x="379.3" y="176.5" width="2.6" height="3" fill="#8a8a8a"/><rect x="384.5" y="176.5" width="2.6" height="3" fill="#8a8a8a"/><rect x="379.3" y="182" width="2.6" height="7.5" fill="#8a8a8a"/><polyline points="393.5,202.2 385.3,202.2 385.3,182 392,182" fill="none" stroke="#404040" stroke-width="1.8"/><line x1="386.8" y1="186" x2="394" y2="186" stroke="#404040" stroke-width="1.6"/><rect x="388.3" y="189" width="2.2" height="4" fill="#555"/><rect x="388.3" y="195.5" width="4" height="2.5" fill="#999"/><path d="M392.8,190.2 H404 V192.8 L400.3,196 V202.2 H396.2 V196 L392.8,192.8 Z" fill="#fff" stroke="#404040" stroke-width="1.7"/><path d="M395.5,178.6 Q402,176 404.4,182 Q405,186 403,188" fill="none" stroke="#1e88d8" stroke-width="1.9"/><polyline points="399,174.5 395,178.5 399,182.5" fill="none" stroke="#1e88d8" stroke-width="1.9"/></svg>
<svg style="position:absolute;left:660px;top:66px;overflow:visible;clip-path:inset(0 0 0 0);" width="70" height="70" viewBox="660 66 70 70"><path d="M669.4,74.2 H692.9 L708.1,87.6 V126.6 H669.4 Z" fill="#f2f2f2"/><polyline points="689.2,126.6 669.4,126.6 669.4,74.2 692.9,74.2 708.1,87.6 708.1,99.5" fill="none" stroke="#8c8c8c" stroke-width="1.7"/><polyline points="692.9,74.2 692.9,89.7 708.1,89.7" fill="none" stroke="#8c8c8c" stroke-width="1.7"/><circle cx="706" cy="117" r="15" fill="#fff"/><path d="M692.5,115 A13.5,13.5 0 0 1 718.5,111.5" fill="none" stroke="#a6a6a6" stroke-width="1.7"/><path d="M719.5,118.5 A13.5,13.5 0 0 1 693.5,122.5" fill="none" stroke="#a6a6a6" stroke-width="1.7"/><polyline points="720,104.5 720,113 711.5,113" fill="none" stroke="#a6a6a6" stroke-width="1.8"/><polyline points="693,129 693,121 701,121" fill="none" stroke="#a6a6a6" stroke-width="1.8"/></svg>
<svg style="position:absolute;left:778px;top:66px;overflow:visible;" width="64" height="70" viewBox="778 66 64 70"><path d="M785.6,74.5 H808.7 L824.3,87.9 V126.6 H785.6 Z" fill="#fbfbfb"/><polyline points="801.4,126.6 785.6,126.6 785.6,74.5 808.7,74.5 824.3,87.9 824.3,96.4" fill="none" stroke="#404040" stroke-width="2"/><polyline points="808.7,74.5 808.7,89.7 824.3,89.7" fill="none" stroke="#404040" stroke-width="2"/><rect x="807.3" y="102" width="27.8" height="27.2" fill="#fff" stroke="#404040" stroke-width="2"/><rect x="811" y="105.3" width="3.2" height="3.5" fill="#cac6c3" stroke="#767370" stroke-width="1.4"/><rect x="818.3" y="105.3" width="13.5" height="3.5" fill="#cac6c3" stroke="#767370" stroke-width="1.4"/><rect x="811" y="113.3" width="3.2" height="12.9" fill="#cac6c3" stroke="#767370" stroke-width="1.4"/><polyline points="823,124.6 830.2,124.6 830.2,115" fill="none" stroke="#1e88d8" stroke-width="1.7"/><polyline points="827.3,117.5 830.2,114.3 833.1,117.5" fill="none" stroke="#1e88d8" stroke-width="1.9"/><polyline points="825.5,121.7 822.3,124.6 825.5,127.5" fill="none" stroke="#1e88d8" stroke-width="1.9"/></svg>
<svg style="position:absolute;left:912px;top:64px;overflow:visible;" width="72" height="70" viewBox="912 64 72 70"><rect x="920.9" y="70.8" width="51.60000000000002" height="51.60000000000001" fill="#fbfbfb"/><polyline points="945,122.4 920.9,122.4 920.9,70.8 972.5,70.8 972.5,98" fill="none" stroke="#404040" stroke-width="2.4"/><rect x="926.3" y="76.5" width="9.699999999999955" height="9.600000000000003" fill="#cac6c3" stroke="#767370" stroke-width="1.6"/><rect x="942.4" y="76.5" width="24.59999999999993" height="9.600000000000003" fill="#cac6c3" stroke="#767370" stroke-width="1.6"/><rect x="926.3" y="92.0" width="9.699999999999955" height="25.1" fill="#cac6c3" stroke="#767370" stroke-width="1.6"/><g transform="rotate(-40 958 108)"><rect x="947" y="101" width="24" height="14" fill="#fff" stroke="#b146c2" stroke-width="1.9"/><rect x="942" y="101" width="8" height="14" fill="#d49ee0" stroke="#b146c2" stroke-width="1.9"/></g></svg>
<svg style="position:absolute;left:1050px;top:64px;overflow:visible;" width="68" height="70" viewBox="1050 64 68 70"><rect x="1057.9" y="70.7" width="51.69999999999982" height="51.7" fill="#fbfbfb"/><polyline points="1074,122.4 1057.9,122.4 1057.9,70.7 1109.6,70.7 1109.6,122.4" fill="none" stroke="#404040" stroke-width="2.4"/><rect x="1063.3" y="76.5" width="9.49999999999991" height="9.600000000000003" fill="#cac6c3" stroke="#767370" stroke-width="1.6"/><rect x="1079.2" y="76.5" width="24.799999999999862" height="9.600000000000003" fill="#cac6c3" stroke="#767370" stroke-width="1.6"/><rect x="1063.3" y="92.0" width="9.49999999999991" height="25.1" fill="#cac6c3" stroke="#767370" stroke-width="1.6"/><line x1="1074" y1="122.4" x2="1109.6" y2="122.4" stroke="#fbfbfb" stroke-width="3" stroke-dasharray="4 3"/><text x="1077" y="118" font-family="Liberation Serif" font-style="italic" font-size="33" fill="#555">f</text><text x="1087" y="120" font-family="Liberation Serif" font-style="italic" font-size="25" fill="#555">x</text></svg>
<svg style="position:absolute;left:1180px;top:62px;overflow:visible;" width="74" height="70" viewBox="1180 62 74 70"><rect x="1190" y="70" width="39" height="40" fill="#fafafa"/><polyline points="1190,88.8 1190,69.8 1228.7,69.8 1228.7,93" fill="none" stroke="#3a3a3a" stroke-width="2.8"/><rect x="1196.5" y="76" width="8.5" height="7.5" fill="#d0d0d0" stroke="#7a7a7a" stroke-width="1.6"/><rect x="1208.5" y="76" width="14" height="7.5" fill="#d0d0d0" stroke="#7a7a7a" stroke-width="1.6"/><path d="M1195,94 Q1187,101 1189,109 Q1192,116 1213,116.8" fill="none" stroke="#1e88d8" stroke-width="3"/><polyline points="1203,106.5 1213.5,116.8 1203,127" fill="none" stroke="#1e88d8" stroke-width="3"/><text x="1217" y="119" font-family="Liberation Serif" font-style="italic" font-size="38" fill="#3a3a3a">f</text><text x="1229" y="125" font-family="Liberation Serif" font-style="italic" font-size="30" fill="#3a3a3a">x</text></svg>
<svg style="position:absolute;left:1298px;top:64px;overflow:visible;" width="50" height="66" viewBox="1298 64 50 66"><rect x="1305.4" y="70.9" width="35" height="52" fill="#fafafa" stroke="#3a3a3a" stroke-width="2"/><line x1="1312" y1="78.2" x2="1314" y2="78.2" stroke="#666" stroke-width="1.4"/><line x1="1316" y1="78.2" x2="1333" y2="78.2" stroke="#666" stroke-width="1.4"/><line x1="1312" y1="86" x2="1314" y2="86" stroke="#666" stroke-width="1.4"/><line x1="1316" y1="86" x2="1333" y2="86" stroke="#666" stroke-width="1.4"/><line x1="1312" y1="93.7" x2="1314" y2="93.7" stroke="#666" stroke-width="1.4"/><line x1="1316" y1="93.7" x2="1333" y2="93.7" stroke="#666" stroke-width="1.4"/><line x1="1305.4" y1="102.5" x2="1340.4" y2="102.5" stroke="#3a3a3a" stroke-width="1.8"/><line x1="1305.4" y1="112.5" x2="1340.4" y2="112.5" stroke="#3a3a3a" stroke-width="1.6"/><line x1="1322.9" y1="102.5" x2="1322.9" y2="122.9" stroke="#3a3a3a" stroke-width="1.6"/></svg>
<div style="position:absolute;left:1073.00px;top:288.30px;width:455.00px;height:854.90px;background:#f0f0f0;box-shadow:0 0 22px 6px rgba(0,0,0,0.22);"></div>
<div style="position:absolute;left:1073.00px;top:288.30px;width:455.00px;height:854.90px;background:#f0f0f0;border:1.8px solid #6a6a6a;box-sizing:border-box;"></div>
<div style="position:absolute;left:1074.80px;top:290.10px;width:451.40px;height:57.50px;background:#fff;"></div>
<span class="t" style="left:1088.49px;top:308.33px;font-size:23px;color:#1a1a1a;transform:scaleX(0.9553);">Insert Slicers</span>
<span class="t" style="left:1389.50px;top:307.83px;font-size:23px;color:#1a1a1a;">?</span>
<svg style="position:absolute;left:1468px;top:304px;overflow:visible;" width="28" height="26" viewBox="1468 304 28 26"><line x1="1472.5" y1="308.5" x2="1491" y2="326.5" stroke="#1a1a1a" stroke-width="1.8"/><line x1="1491" y1="308.5" x2="1472.5" y2="326.5" stroke="#1a1a1a" stroke-width="1.8"/></svg>
<div style="position:absolute;left:1086.30px;top:368.30px;width:428.30px;height:708.90px;background:#fcfcfc;border:2px solid #b4b4b4;box-sizing:border-box;"></div>
<div style="position:absolute;left:1101.20px;top:423.10px;width:398.20px;height:36.50px;background:#d3ecdf;"></div>
<div style="position:absolute;left:1103.00px;top:384.60px;width:25.20px;height:25.00px;background:#fff;border:2px solid #6a6a6a;box-sizing:border-box;"></div>
<span class="t" style="left:1139.98px;top:387.09px;font-size:20.8px;color:#2a2a2a;transform:scaleX(1.0246);">Item Name</span>
<div style="position:absolute;left:1103.00px;top:425.10px;width:25.20px;height:25.00px;background:#d3ecdf;border:2px solid #7db894;box-sizing:border-box;"></div>
<svg style="position:absolute;left:1106px;top:428.1px;overflow:visible;" width="20" height="20.0" viewBox="1106 428.1 20 20.0"><polyline points="1109.3,439.0 1114.5,444.20000000000005 1123.9,432.20000000000005" fill="none" stroke="#333" stroke-width="2.4"/></svg>
<span class="t" style="left:1139.95px;top:427.64px;font-size:20.8px;color:#2a2a2a;transform:scaleX(1.0478);">Category</span>
<div style="position:absolute;left:1103.00px;top:465.60px;width:25.20px;height:25.00px;background:#fff;border:2px solid #6a6a6a;box-sizing:border-box;"></div>
<span class="t" style="left:1141.00px;top:468.19px;font-size:20.8px;color:#2a2a2a;transform:scaleX(1.0111);">Stock</span>
<div style="position:absolute;left:1103.00px;top:506.10px;width:25.20px;height:25.00px;background:#fff;border:2px solid #6a6a6a;box-sizing:border-box;"></div>
<span class="t" style="left:1139.97px;top:508.74px;font-size:20.8px;color:#2a2a2a;transform:scaleX(1.0278);">Reorder Level</span>
<div style="position:absolute;left:1103.00px;top:546.60px;width:25.20px;height:25.00px;background:#fff;border:2px solid #6a6a6a;box-sizing:border-box;"></div>
<span class="t" style="left:1141.00px;top:549.29px;font-size:20.8px;color:#2a2a2a;transform:scaleX(1.0736);">Supplier</span>
<div style="position:absolute;left:1528.50px;top:289.00px;width:7.50px;height:861.00px;background:#d4d4d4;"></div>
<div style="position:absolute;left:1528.50px;top:314.00px;width:7.50px;height:96.00px;background:#c9c9c9;"></div>
<div style="position:absolute;left:1528.50px;top:313.30px;width:7.50px;height:1.40px;background:#8f8f8f;"></div>
<div style="position:absolute;left:1528.50px;top:409.30px;width:7.50px;height:1.40px;background:#8f8f8f;"></div>
<div style="position:absolute;left:1528.50px;top:464.30px;width:7.50px;height:1.40px;background:#8f8f8f;"></div>
<div style="position:absolute;left:1528.50px;top:490.90px;width:7.50px;height:1.40px;background:#8f8f8f;"></div>
<div style="position:absolute;left:1528.50px;top:535.30px;width:7.50px;height:1.40px;background:#8f8f8f;"></div>
<div style="position:absolute;left:1528.50px;top:567.30px;width:7.50px;height:1.40px;background:#8f8f8f;"></div>
<div style="position:absolute;left:1528.50px;top:694.80px;width:7.50px;height:1.40px;background:#8f8f8f;"></div>
<div style="position:absolute;left:1528.50px;top:775.30px;width:7.50px;height:1.40px;background:#8f8f8f;"></div>
<div style="position:absolute;left:1528.50px;top:920.30px;width:7.50px;height:1.40px;background:#8f8f8f;"></div>
<div style="position:absolute;left:1528.50px;top:959.30px;width:7.50px;height:1.40px;background:#8f8f8f;"></div>
<div style="position:absolute;left:1528.50px;top:1003.30px;width:7.50px;height:1.40px;background:#8f8f8f;"></div>
<div style="position:absolute;left:1528.50px;top:1059.30px;width:7.50px;height:1.40px;background:#8f8f8f;"></div>
<div style="position:absolute;left:1528.50px;top:1094.30px;width:7.50px;height:1.40px;background:#8f8f8f;"></div>
<div style="position:absolute;left:1528.50px;top:921.00px;width:7.50px;height:39.00px;background:#e6e6e6;"></div>
<div style="position:absolute;left:1528.50px;top:1004.00px;width:7.50px;height:56.00px;background:#e6e6e6;"></div>
<span class="t" style="left:1529.00px;top:1098.02px;font-size:21px;color:#222;">e</span>
<div style="position:absolute;left:1210.30px;top:1086.80px;width:139.40px;height:39.60px;background:#e1e1e1;border:3px solid #0078d7;box-sizing:border-box;"></div>
<span class="t" style="left:1266.09px;top:1097.90px;font-size:21.5px;color:#1a1a1a;transform:scaleX(0.9114);">OK</span>
<div style="position:absolute;left:1372.00px;top:1086.80px;width:140.40px;height:39.60px;background:#e1e1e1;border:1.5px solid #adadad;box-sizing:border-box;"></div>
<span class="t" style="left:1408.51px;top:1097.90px;font-size:21.5px;color:#1a1a1a;transform:scaleX(0.9854);">Cancel</span>
<svg style="position:absolute;left:1500px;top:1120px;overflow:visible;" width="24" height="22" viewBox="1500 1120 24 22"><rect x="1518" y="1136" width="2.6" height="2.6" fill="#bdbdbd"/><rect x="1513" y="1136" width="2.6" height="2.6" fill="#bdbdbd"/><rect x="1508" y="1136" width="2.6" height="2.6" fill="#bdbdbd"/><rect x="1518" y="1131" width="2.6" height="2.6" fill="#bdbdbd"/><rect x="1513" y="1131" width="2.6" height="2.6" fill="#bdbdbd"/><rect x="1518" y="1126" width="2.6" height="2.6" fill="#bdbdbd"/></svg>
<div style="position:absolute;left:355.30px;top:54.20px;width:202.90px;height:61.80px;border:4px solid #ff0000;box-sizing:border-box;box-shadow:4px 5px 8px rgba(0,0,0,0.35), inset 3px 4px 6px rgba(0,0,0,0.25);"></div>
<div style="position:absolute;left:564.00px;top:56.10px;width:55.60px;height:55.60px;background:#8b0000;border-radius:50%;box-shadow:0 1px 3px rgba(0,0,0,0.35);"></div>
<span class="t" style="left:581.63px;top:68.57px;font-size:33px;color:#fff;-webkit-text-stroke:0.5px #fff;">2</span>
<div style="position:absolute;left:1472.80px;top:38.40px;width:55.80px;height:55.80px;background:#8b0000;border-radius:50%;box-shadow:0 1px 3px rgba(0,0,0,0.35);"></div>
<span class="t" style="left:1489.53px;top:50.97px;font-size:33px;color:#fff;-webkit-text-stroke:0.5px #fff;">1</span>
<div style="position:absolute;left:1288.70px;top:413.90px;width:55.80px;height:55.80px;background:#8b0000;border-radius:50%;box-shadow:0 1px 3px rgba(0,0,0,0.35);"></div>
<span class="t" style="left:1306.43px;top:426.47px;font-size:33px;color:#fff;-webkit-text-stroke:0.5px #fff;">3</span>
<div style="position:absolute;left:1309.50px;top:1052.70px;width:57.00px;height:57.00px;background:#8b0000;border-radius:50%;box-shadow:0 1px 3px rgba(0,0,0,0.35);"></div>
<span class="t" style="left:1328.83px;top:1065.87px;font-size:33px;color:#fff;-webkit-text-stroke:0.5px #fff;">4</span>
</body></html>
